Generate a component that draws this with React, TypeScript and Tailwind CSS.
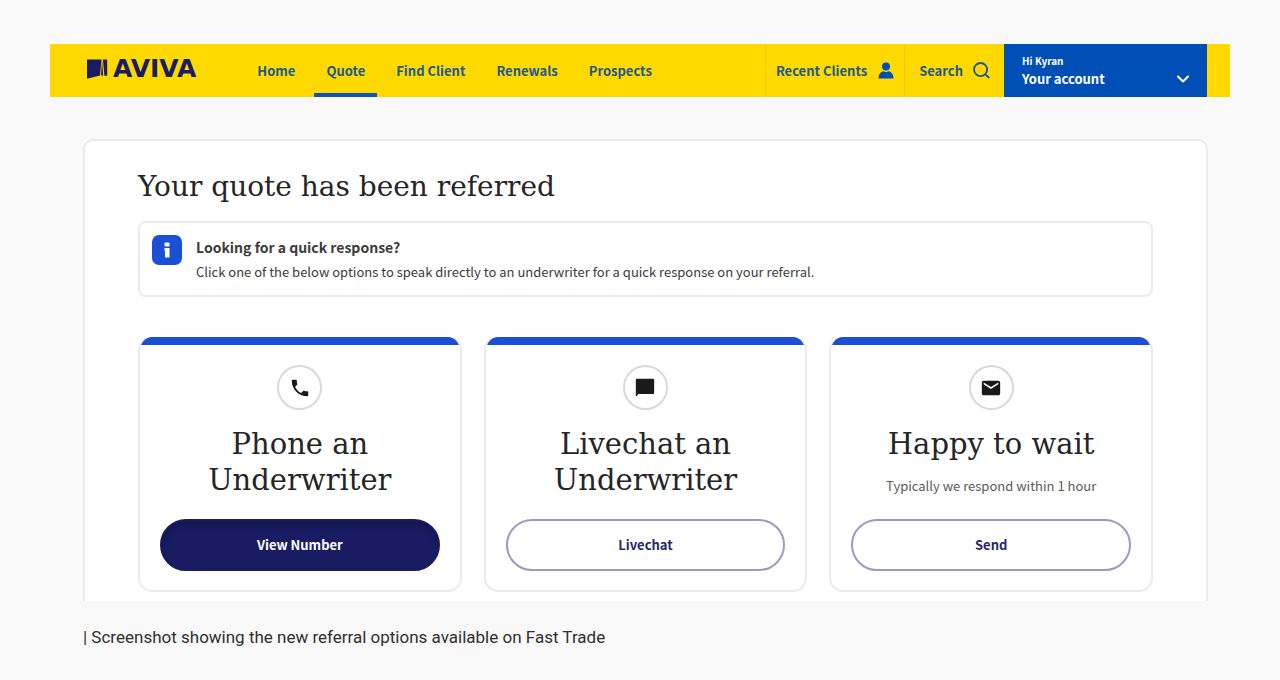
import React from 'react';
import { ChevronDown } from 'lucide-react';
import { MdMail, MdPhone } from 'react-icons/md';

interface NavItem {
  label: string;
  active?: boolean;
}

interface ReferralOption {
  title: string;
  note?: string;
  action: string;
  icon: React.ComponentType<{ className?: string }>;
  primary?: boolean;
}

const Logo = () => (
  <a href="#" className="flex items-center gap-[5px] text-[#191c62]">
    <svg viewBox="0 0 22 20" className="h-5 w-[22px]" fill="currentColor" aria-hidden="true">
      <path d="M1 0.5H15.6L14 16.4L1 19.8Z" />
      <path d="M16.1 1.5L17.2 16.8L15 16.2Z" />
      <path d="M16.9 0.5H21.2V16.8H18.4Z" />
    </svg>
    <span className="font-['DejaVu_Sans',sans-serif] text-[25px] leading-5 font-bold">AVIVA</span>
  </a>
);

const PersonIcon = () => (
  <svg viewBox="0 0 16 17" className="h-[17px] w-4" fill="#004fb6" aria-hidden="true">
    <circle cx="8" cy="4.5" r="4" />
    <path d="M0.5 16.5C0.5 12.6 2.2 10.2 5 9.3C6.8 10.3 9.2 10.3 11 9.3C13.8 10.2 15.5 12.6 15.5 16.5Z" />
  </svg>
);

const SearchIcon = () => (
  <svg viewBox="0 0 18 18" className="size-[17px]" fill="none" stroke="currentColor" strokeWidth="2" aria-hidden="true">
    <circle cx="8" cy="8" r="6.9" />
    <path d="M12.8 12.8L17.2 17" />
  </svg>
);

const ChatIcon = ({ className }: { className?: string }) => (
  <svg viewBox="0 0 24 24" className={className} fill="currentColor" aria-hidden="true">
    <path d="M3 2H21Q22 2 22 3V17.5Q22 18.5 21 18.5H5L2 21.5V3Q2 2 3 2Z" />
  </svg>
);

const navItems: NavItem[] = [
  { label: 'Home' },
  { label: 'Quote', active: true },
  { label: 'Find Client' },
  { label: 'Renewals' },
  { label: 'Prospects' },
];

const options: ReferralOption[] = [
  { title: 'Phone an Underwriter', action: 'View Number', icon: MdPhone, primary: true },
  { title: 'Livechat an Underwriter', action: 'Livechat', icon: ChatIcon },
  { title: 'Happy to wait', note: 'Typically we respond within 1 hour', action: 'Send', icon: MdMail },
];

const Header = () => (
  <header className="flex min-h-[53px] flex-wrap items-stretch bg-[#ffd900] pr-[23px] pl-9 text-[13px] font-bold text-[#1c5a87]">
    <div className="flex items-center pb-1">
      <Logo />
    </div>
    <nav className="ml-[49px] flex flex-wrap items-stretch gap-[7px]">
      {navItems.map((item) => (
        <a
          key={item.label}
          href="#"
          className={`flex items-center border-b-4 px-3 pt-1 ${
            item.active ? 'border-[#0f55b8]' : 'border-transparent'
          }`}
        >
          {item.label}
        </a>
      ))}
    </nav>
    <div className="ml-auto flex items-stretch">
      <button className="flex items-center gap-[11px] border-l border-[#ecc900] px-[10px]">
        Recent Clients
        <PersonIcon />
      </button>
      <button className="flex items-center gap-[10px] border-l border-[#ecc900] px-[14px]">
        Search
        <SearchIcon />
      </button>
      <button className="flex w-[203px] items-end justify-between bg-[#004fb6] pr-[14px] pb-2 pl-[18px] text-left text-white">
        <span className="flex flex-col">
          <span className="text-[10px] leading-4">Hi Kyran</span>
          <span className="text-[13px] leading-5">Your account</span>
        </span>
        <ChevronDown className="size-5" strokeWidth={2.5} />
      </button>
    </div>
  </header>
);

const InfoBanner = () => (
  <section className="mt-4 flex gap-[14px] rounded-lg border-2 border-[#ebebeb] px-3 pt-3 pb-[11px]">
    <svg viewBox="0 0 30 30" className="size-[30px] shrink-0" aria-hidden="true">
      <rect width="30" height="30" rx="7" fill="#1b4fd6" />
      <rect x="12.5" y="7.5" width="5" height="4" rx="1" fill="#fff" />
      <path d="M12.5 13H17.5V22.5H13V16H12.5Z" fill="#fff" />
    </svg>
    <div className="text-[#3b3b3b]">
      <h2 className="text-sm leading-6 font-bold">Looking for a quick response?</h2>
      <p className="mt-px text-[13px] leading-6">
        Click one of the below options to speak directly to an underwriter for a quick response on your referral.
      </p>
    </div>
  </section>
);

const OptionCard: React.FC<{ option: ReferralOption }> = ({ option }) => {
  const Icon = option.icon;

  return (
    <article className="flex flex-col overflow-hidden rounded-[14px] border-2 border-t-0 border-[#ebebeb] text-center">
      <div className="h-2 bg-[#1b4fd6]" />
      <div className="flex flex-1 flex-col items-center px-5 pt-5 pb-[19px]">
        <div className="flex size-[45px] items-center justify-center rounded-full border-2 border-[#d9d9d9] text-[#1a1a1a]">
          <Icon className="size-[22px]" />
        </div>
        <h2 className="mt-4 max-w-[240px] font-['DejaVu_Serif',serif] text-[29px] leading-9 text-[#252525]">
          {option.title}
        </h2>
        {option.note && <p className="mt-3 text-[13px] leading-6 text-[#5a5a5a]">{option.note}</p>}
        <div className="mt-auto w-full pt-[21px]">
          <button
            className={`h-[52px] w-full rounded-full border-2 text-[13px] font-bold ${
              option.primary
                ? 'border-[#191c62] bg-[#191c62] text-white shadow-[inset_0_4px_4px_#13164f]'
                : 'border-[#9c9ac4] bg-white text-[#25286e]'
            }`}
          >
            {option.action}
          </button>
        </div>
      </div>
    </article>
  );
};

export default function App() {
  return (
    <div className="min-h-screen bg-[#f9f9f9] px-[50px] pt-11 pb-8 font-['Noto_Sans_CJK_SC',sans-serif]">
      <figure>
        <Header />
        <main className="mt-[42px] mr-[22px] ml-[33px] rounded-t-[10px] border-2 border-b-0 border-[#ebebeb] bg-white px-[53px] pt-7 pb-[9px]">
          <h1 className="font-['DejaVu_Serif',serif] text-[28px] leading-9 text-[#252525]">
            Your quote has been referred
          </h1>
          <InfoBanner />
          <div className="mt-10 grid grid-cols-3 gap-[22px]">
            {options.map((option) => (
              <OptionCard key={option.title} option={option} />
            ))}
          </div>
        </main>
        <figcaption className="mt-6 ml-[33px] font-['Roboto',sans-serif] text-[17px] leading-6 text-[#2f2f2f]">
          | Screenshot showing the new referral options available on Fast Trade
        </figcaption>
      </figure>
    </div>
  );
}
